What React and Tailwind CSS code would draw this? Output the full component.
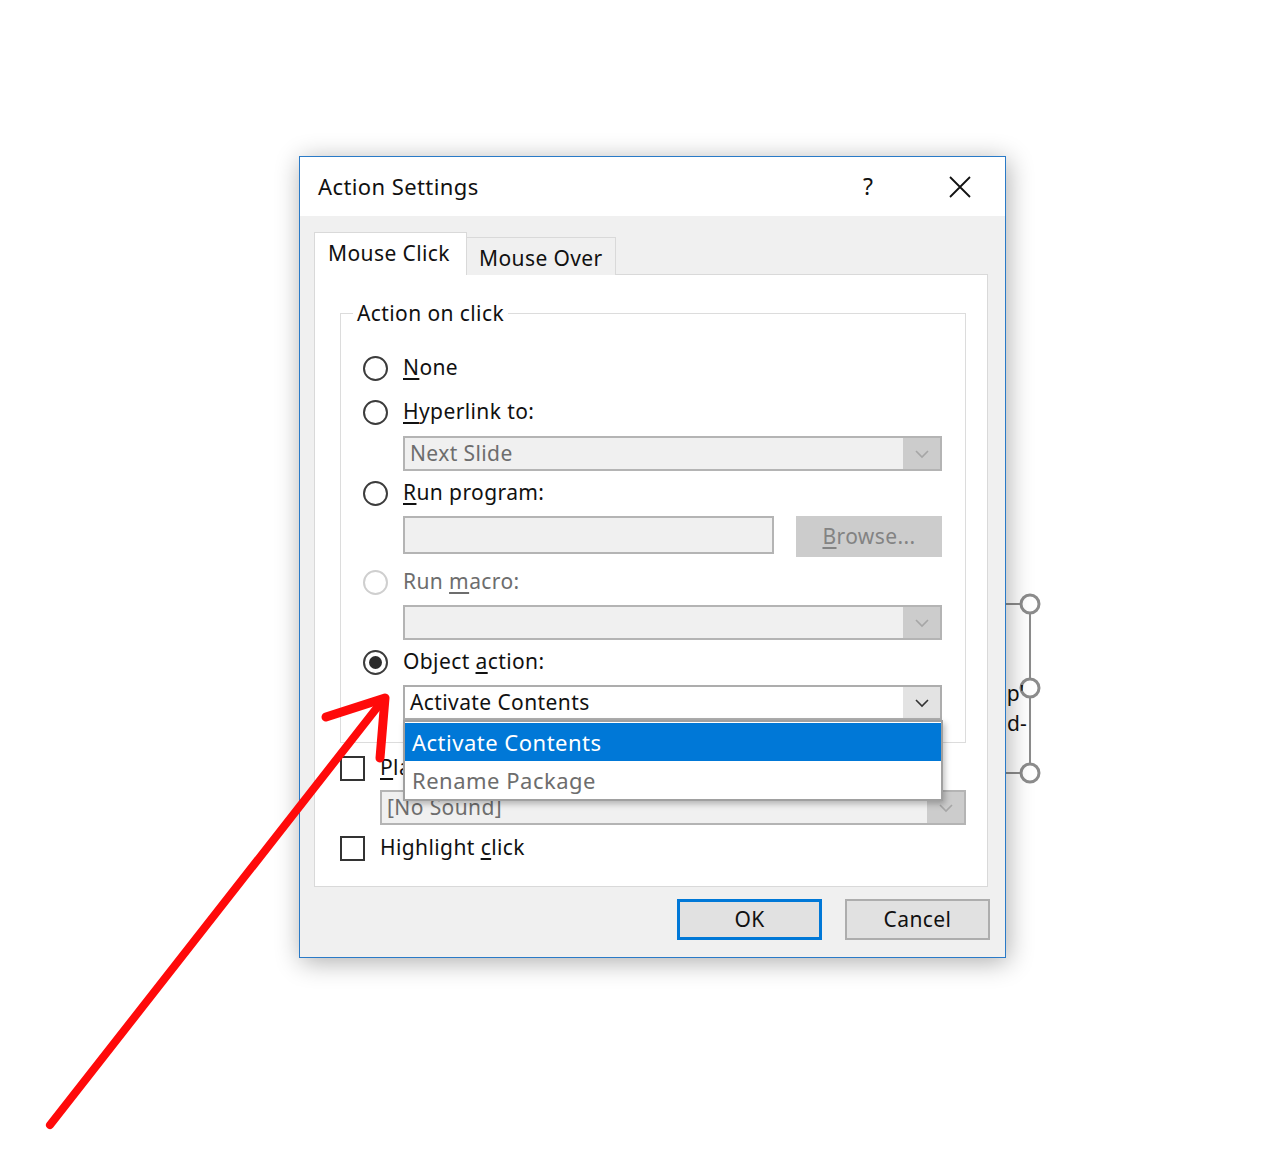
import React from "react";

const font = { fontFamily: '"Noto Sans", "Open Sans", sans-serif' };

function Radio({ checked, disabled }) {
  return (
    <div
      className={
        "w-[25px] h-[25px] rounded-full border-2 flex items-center justify-center bg-white shrink-0 " +
        (disabled ? "border-[#cfcfcf]" : "border-[#3c3c3c]")
      }
    >
      {checked && <div className="w-[13px] h-[13px] rounded-full bg-[#2b2b2b]" />}
    </div>
  );
}

function Checkbox() {
  return <div className="w-[25px] h-[25px] border-2 border-[#333] bg-white shrink-0" />;
}

function Chevron({ color }) {
  return (
    <svg width="16" height="10" viewBox="0 0 16 10">
      <path d="M2 2 L8 8 L14 2" fill="none" stroke={color} strokeWidth="1.6" />
    </svg>
  );
}

function Combo({ text, disabled, className = "" }) {
  return (
    <div
      className={
        "h-[35px] flex border-2 " +
        (disabled ? "border-[#b4b4b4] bg-[#f0f0f0]" : "border-[#adadad] bg-white") +
        " " +
        className
      }
    >
      <div
        className={
          "flex-1 flex items-center pl-[5px] text-[21px] tracking-[0.4px] " +
          (disabled ? "text-[#6d6d6d]" : "text-[#111]")
        }
      >
        {text}
      </div>
      <div
        className={
          "w-[37px] flex items-center justify-center " +
          (disabled ? "bg-[#cccccc]" : "bg-[#e3e3e3]")
        }
      >
        <Chevron color={disabled ? "#a6a6a6" : "#333"} />
      </div>
    </div>
  );
}

function Label({ children, disabled }) {
  return (
    <span
      className={
        "text-[21px] tracking-[0.4px] " + (disabled ? "text-[#6d6d6d]" : "text-[#111]")
      }
    >
      {children}
    </span>
  );
}

const U = ({ children }) => <span className="underline underline-offset-[3px]">{children}</span>;

function RadioRow({ checked, disabled, children, className = "" }) {
  return (
    <div className={"h-[30px] flex items-center gap-[15px] " + className}>
      <Radio checked={checked} disabled={disabled} />
      <Label disabled={disabled}>{children}</Label>
    </div>
  );
}

export default function App() {
  return (
    <div className="relative w-[1287px] h-[1161px] bg-white overflow-hidden" style={font}>
      {/* slide shape handles behind the dialog */}
      <svg className="absolute left-0 top-0" width="1287" height="1161">
        <line x1="1030" y1="604" x2="1030" y2="773" stroke="#8c8c8c" strokeWidth="2" />
        <line x1="1000" y1="604" x2="1021" y2="604" stroke="#8c8c8c" strokeWidth="2" />
        <line x1="1000" y1="773" x2="1021" y2="773" stroke="#8c8c8c" strokeWidth="2" />
        <circle cx="1030" cy="604" r="9" fill="white" stroke="#8c8c8c" strokeWidth="3" />
        <circle cx="1030" cy="688" r="9" fill="white" stroke="#8c8c8c" strokeWidth="3" />
        <circle cx="1030" cy="773" r="9" fill="white" stroke="#8c8c8c" strokeWidth="3" />
      </svg>
      <div className="absolute left-[994px] top-[678px] text-[21px] leading-[30px] text-[#111]">
        <div>op'</div>
        <div>nd-</div>
      </div>

      {/* dialog */}
      <div className="relative ml-[299px] mt-[156px] w-[707px] h-[802px] border border-[#2a7ac7] bg-[#f0f0f0] shadow-[2px_4px_24px_rgba(0,0,0,0.32)] flex flex-col">
        <div className="h-[59px] bg-white flex items-center pl-[18px] pr-[33px]">
          <span className="text-[22px] tracking-[0.4px] text-[#111] flex-1">Action Settings</span>
          <span className="text-[23px] text-[#111] mr-[75px]">?</span>
          <svg width="24" height="24" viewBox="0 0 24 24">
            <path d="M2 2 L22 22 M22 2 L2 22" stroke="#111" strokeWidth="1.8" />
          </svg>
        </div>

        <div className="pl-[14px] pr-[17px] pt-[16px] flex flex-col">
          {/* tabs */}
          <div className="flex items-end h-[43px] relative z-10">
            <div className="w-[153px] h-[43px] bg-white border border-b-0 border-[#d9d9d9] pl-[13px] pt-[5px] text-[21px] tracking-[0.4px] text-[#111]">
              Mouse Click
            </div>
            <div className="w-[149px] h-[38px] bg-[#f0f0f0] border border-l-0 border-b-0 border-[#d9d9d9] pl-[12px] pt-[5px] text-[21px] tracking-[0.4px] text-[#111]">
              Mouse Over
            </div>
          </div>

          {/* panel */}
          <div className="relative -mt-px w-[674px] h-[613px] bg-white border border-[#d9d9d9] pl-[25px] pr-[21px] pt-[38px]">
            <div className="relative h-[430px] border border-[#dcdcdc] pl-[22px] pr-[23px] pt-[39px]">
              <div className="absolute left-[12px] -top-[16px] bg-white px-[4px] text-[21px] tracking-[0.4px] text-[#111] leading-[30px]">
                Action on click
              </div>
              <RadioRow>
                <U>N</U>one
              </RadioRow>
              <RadioRow className="mt-[14px]">
                <U>H</U>yperlink to:
              </RadioRow>
              <Combo text="Next Slide" disabled className="ml-[40px] mt-[9px]" />
              <RadioRow className="mt-[7px]">
                <U>R</U>un program:
              </RadioRow>
              <div className="ml-[40px] mt-[8px] h-[42px] flex items-start justify-between">
                <div className="w-[371px] h-[38px] border-2 border-[#b4b4b4] bg-[#f0f0f0]" />
                <div className="w-[146px] h-[41px] bg-[#cccccc] flex items-center justify-center text-[21px] tracking-[0.4px] text-[#838383]">
                  <span>
                    <U>B</U>rowse...
                  </span>
                </div>
              </div>
              <RadioRow disabled className="mt-[9px]">
                Run <U>m</U>acro:
              </RadioRow>
              <Combo text="" disabled className="ml-[40px] mt-[8px]" />
              <RadioRow checked className="mt-[7px]">
                Object <U>a</U>ction:
              </RadioRow>
              <Combo text="Activate Contents" className="ml-[40px] mt-[8px]" />
            </div>

            <div className="mt-[12px] h-[26px] flex items-center gap-[15px]">
              <Checkbox />
              <Label>
                <U>P</U>lay sound:
              </Label>
            </div>
            <Combo text="[No Sound]" disabled className="ml-[40px] mt-[9px]" />
            <div className="mt-[10px] h-[26px] flex items-center gap-[15px]">
              <Checkbox />
              <Label>
                Highlight <U>c</U>lick
              </Label>
            </div>

            {/* open dropdown list */}
            <div className="absolute left-[88px] top-[445px] w-[540px] h-[81px] bg-white border-2 border-[#a0a0a0] shadow-[2px_3px_6px_rgba(0,0,0,0.25)] pt-[1px]">
              <div className="h-[38px] bg-[#0078d7] text-white text-[22px] tracking-[0.5px] flex items-center pl-[7px]">
                Activate Contents
              </div>
              <div className="h-[38px] text-[#6d6d6d] text-[22px] tracking-[0.5px] flex items-center pl-[7px]">
                Rename Package
              </div>
            </div>
          </div>

          {/* buttons */}
          <div className="flex justify-end gap-[23px] mt-[12px] -mr-[2px]">
            <div className="w-[145px] h-[41px] border-[3px] border-[#0078d7] bg-[#e1e1e1] flex items-center justify-center text-[21px] tracking-[0.4px] text-[#111]">
              OK
            </div>
            <div className="w-[145px] h-[41px] border-2 border-[#adadad] bg-[#e1e1e1] flex items-center justify-center text-[21px] tracking-[0.4px] text-[#111]">
              Cancel
            </div>
          </div>
        </div>
      </div>

      {/* red annotation arrow */}
      <svg className="absolute left-0 top-0 pointer-events-none" width="1287" height="1161">
        <line x1="50" y1="1125" x2="383" y2="700" stroke="#ff0a0a" strokeWidth="8" strokeLinecap="round" />
        <polyline
          points="326,717 385,698 380,758"
          fill="none"
          stroke="#ff0a0a"
          strokeWidth="9"
          strokeLinecap="round"
          strokeLinejoin="round"
        />
      </svg>
    </div>
  );
}
